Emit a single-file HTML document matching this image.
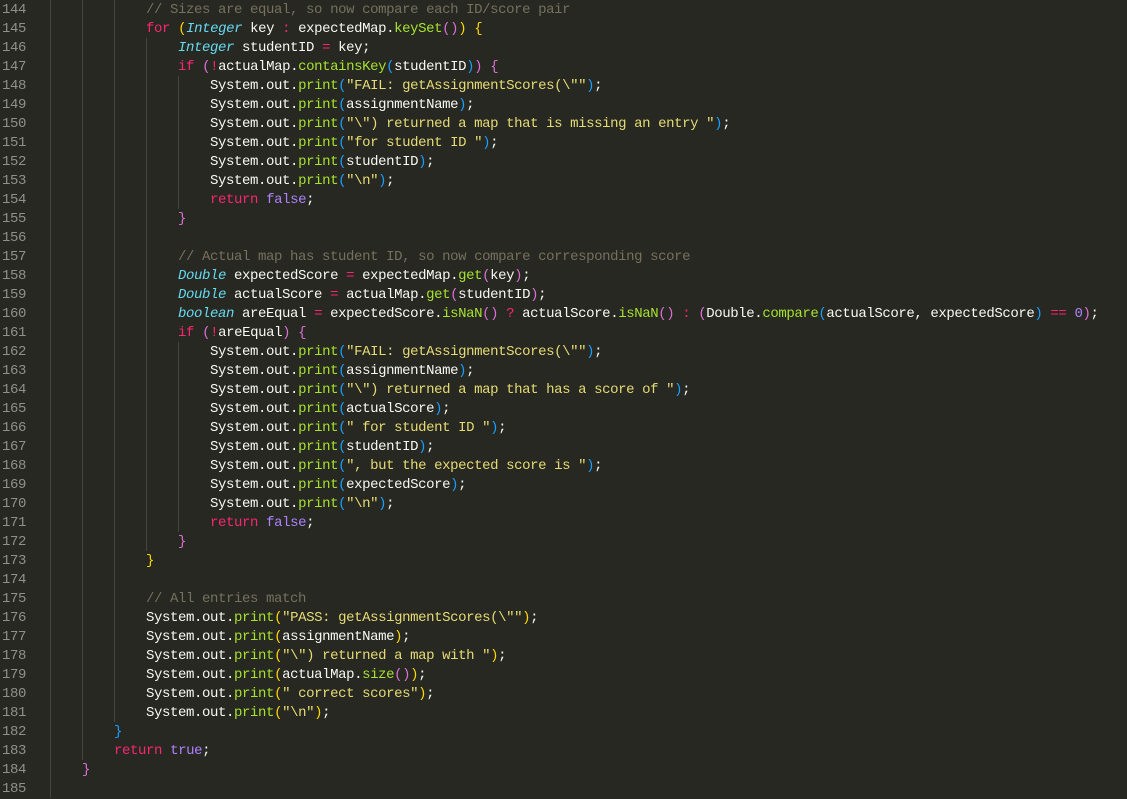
<!DOCTYPE html>
<html><head><style>
body{margin:0;background:#272822;width:1127px;height:798px;overflow:hidden;position:relative}
.ln{position:absolute;left:0;top:1px;width:26px;font:14px "Liberation Mono",monospace;letter-spacing:-0.4px;line-height:19px;color:#90908a;text-align:right}
pre{position:absolute;left:18px;top:1px;margin:0;font:14px "Liberation Mono",monospace;letter-spacing:-0.4px;line-height:19px;color:#f8f8f2}
.gd{position:absolute;width:1px;background:#45463f}
.k{color:#f92672}.t{color:#66d9ef;font-style:italic}.f{color:#a6e22e}.s{color:#e6db74}.c{color:#75715e}.n{color:#ae81ff}
.g{color:#ffd700}.m{color:#da70d6}.b{color:#179fff}
</style></head><body>
<div class="gd" style="left:50px;top:0;height:798px"></div>
<div class="gd" style="left:82px;top:0;height:760px"></div>
<div class="gd" style="left:114px;top:0;height:722px"></div>
<div class="gd" style="left:146px;top:38px;height:513px"></div>
<div class="gd" style="left:178px;top:76px;height:133px"></div>
<div class="gd" style="left:178px;top:342px;height:190px"></div>
<div class="ln">144<br>145<br>146<br>147<br>148<br>149<br>150<br>151<br>152<br>153<br>154<br>155<br>156<br>157<br>158<br>159<br>160<br>161<br>162<br>163<br>164<br>165<br>166<br>167<br>168<br>169<br>170<br>171<br>172<br>173<br>174<br>175<br>176<br>177<br>178<br>179<br>180<br>181<br>182<br>183<br>184<br>185</div>
<pre>                <span class="c">// Sizes are equal, so now compare each ID/score pair</span>
                <span class="k">for</span> <span class="g">(</span><span class="t">Integer</span> key <span class="k">:</span> expectedMap.<span class="f">keySet</span><span class="m">()</span><span class="g">)</span> <span class="g">{</span>
                    <span class="t">Integer</span> studentID <span class="k">=</span> key;
                    <span class="k">if</span> <span class="m">(</span><span class="k">!</span>actualMap.<span class="f">containsKey</span><span class="b">(</span>studentID<span class="b">)</span><span class="m">)</span> <span class="m">{</span>
                        System.out.<span class="f">print</span><span class="b">(</span><span class="s">"FAIL: getAssignmentScores(\""</span><span class="b">)</span>;
                        System.out.<span class="f">print</span><span class="b">(</span>assignmentName<span class="b">)</span>;
                        System.out.<span class="f">print</span><span class="b">(</span><span class="s">"\") returned a map that is missing an entry "</span><span class="b">)</span>;
                        System.out.<span class="f">print</span><span class="b">(</span><span class="s">"for student ID "</span><span class="b">)</span>;
                        System.out.<span class="f">print</span><span class="b">(</span>studentID<span class="b">)</span>;
                        System.out.<span class="f">print</span><span class="b">(</span><span class="s">"\n"</span><span class="b">)</span>;
                        <span class="k">return</span> <span class="n">false</span>;
                    <span class="m">}</span>

                    <span class="c">// Actual map has student ID, so now compare corresponding score</span>
                    <span class="t">Double</span> expectedScore <span class="k">=</span> expectedMap.<span class="f">get</span><span class="m">(</span>key<span class="m">)</span>;
                    <span class="t">Double</span> actualScore <span class="k">=</span> actualMap.<span class="f">get</span><span class="m">(</span>studentID<span class="m">)</span>;
                    <span class="t">boolean</span> areEqual <span class="k">=</span> expectedScore.<span class="f">isNaN</span><span class="m">()</span> <span class="k">?</span> actualScore.<span class="f">isNaN</span><span class="m">()</span> <span class="k">:</span> <span class="m">(</span>Double.<span class="f">compare</span><span class="b">(</span>actualScore, expectedScore<span class="b">)</span> <span class="k">==</span> <span class="n">0</span><span class="m">)</span>;
                    <span class="k">if</span> <span class="m">(</span><span class="k">!</span>areEqual<span class="m">)</span> <span class="m">{</span>
                        System.out.<span class="f">print</span><span class="b">(</span><span class="s">"FAIL: getAssignmentScores(\""</span><span class="b">)</span>;
                        System.out.<span class="f">print</span><span class="b">(</span>assignmentName<span class="b">)</span>;
                        System.out.<span class="f">print</span><span class="b">(</span><span class="s">"\") returned a map that has a score of "</span><span class="b">)</span>;
                        System.out.<span class="f">print</span><span class="b">(</span>actualScore<span class="b">)</span>;
                        System.out.<span class="f">print</span><span class="b">(</span><span class="s">" for student ID "</span><span class="b">)</span>;
                        System.out.<span class="f">print</span><span class="b">(</span>studentID<span class="b">)</span>;
                        System.out.<span class="f">print</span><span class="b">(</span><span class="s">", but the expected score is "</span><span class="b">)</span>;
                        System.out.<span class="f">print</span><span class="b">(</span>expectedScore<span class="b">)</span>;
                        System.out.<span class="f">print</span><span class="b">(</span><span class="s">"\n"</span><span class="b">)</span>;
                        <span class="k">return</span> <span class="n">false</span>;
                    <span class="m">}</span>
                <span class="g">}</span>

                <span class="c">// All entries match</span>
                System.out.<span class="f">print</span><span class="g">(</span><span class="s">"PASS: getAssignmentScores(\""</span><span class="g">)</span>;
                System.out.<span class="f">print</span><span class="g">(</span>assignmentName<span class="g">)</span>;
                System.out.<span class="f">print</span><span class="g">(</span><span class="s">"\") returned a map with "</span><span class="g">)</span>;
                System.out.<span class="f">print</span><span class="g">(</span>actualMap.<span class="f">size</span><span class="m">()</span><span class="g">)</span>;
                System.out.<span class="f">print</span><span class="g">(</span><span class="s">" correct scores"</span><span class="g">)</span>;
                System.out.<span class="f">print</span><span class="g">(</span><span class="s">"\n"</span><span class="g">)</span>;
            <span class="b">}</span>
            <span class="k">return</span> <span class="n">true</span>;
        <span class="m">}</span>
</pre>
</body></html>
